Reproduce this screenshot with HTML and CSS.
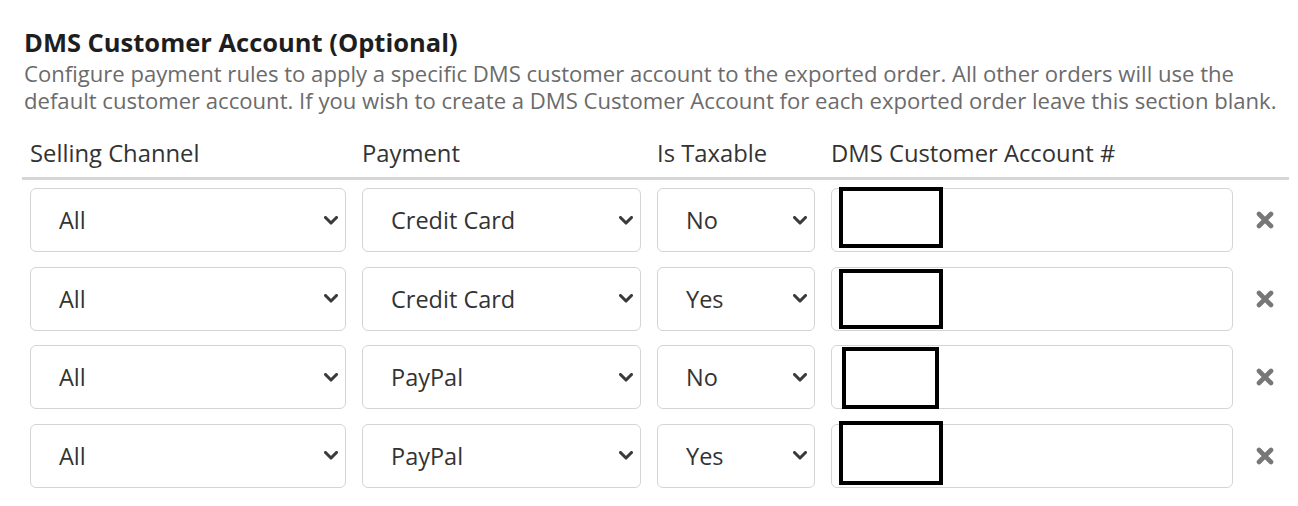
FILE: index.html
```html
<!DOCTYPE html>
<html>
<head>
<meta charset="utf-8">
<link rel="stylesheet" href="styles.css">
</head>
<body>
<section class="section">
  <h2 class="title">DMS Customer Account (Optional)</h2>
  <p class="desc">Configure payment rules to apply a specific DMS customer account to the exported order. All other orders will use the default customer account. If you wish to create a DMS Customer Account for each exported order leave this section blank.</p>
  <div class="grid head">
    <div class="th">Selling Channel</div>
    <div class="th">Payment</div>
    <div class="th">Is Taxable</div>
    <div class="th">DMS Customer Account #</div>
    <div class="th"></div>
  </div>
  <div class="rows">
    <div class="grid row">
      <div class="cell"><div class="select"><span>All</span><svg class="chev" viewBox="0 0 14 9"><path d="M1.5 1.5 L7 7 L12.5 1.5"/></svg></div></div>
      <div class="cell"><div class="select"><span>Credit Card</span><svg class="chev" viewBox="0 0 14 9"><path d="M1.5 1.5 L7 7 L12.5 1.5"/></svg></div></div>
      <div class="cell"><div class="select"><span>No</span><svg class="chev" viewBox="0 0 14 9"><path d="M1.5 1.5 L7 7 L12.5 1.5"/></svg></div></div>
      <div class="cell"><div class="field"><div class="hosted box-1"></div></div></div>
      <div class="cell x"><svg class="xicon" viewBox="0 0 18 18"><path d="M3 3 L15 15 M15 3 L3 15"/></svg></div>
    </div>
    <div class="grid row">
      <div class="cell"><div class="select"><span>All</span><svg class="chev" viewBox="0 0 14 9"><path d="M1.5 1.5 L7 7 L12.5 1.5"/></svg></div></div>
      <div class="cell"><div class="select"><span>Credit Card</span><svg class="chev" viewBox="0 0 14 9"><path d="M1.5 1.5 L7 7 L12.5 1.5"/></svg></div></div>
      <div class="cell"><div class="select"><span>Yes</span><svg class="chev" viewBox="0 0 14 9"><path d="M1.5 1.5 L7 7 L12.5 1.5"/></svg></div></div>
      <div class="cell"><div class="field"><div class="hosted box-2"></div></div></div>
      <div class="cell x"><svg class="xicon" viewBox="0 0 18 18"><path d="M3 3 L15 15 M15 3 L3 15"/></svg></div>
    </div>
    <div class="grid row">
      <div class="cell"><div class="select"><span>All</span><svg class="chev" viewBox="0 0 14 9"><path d="M1.5 1.5 L7 7 L12.5 1.5"/></svg></div></div>
      <div class="cell"><div class="select"><span>PayPal</span><svg class="chev" viewBox="0 0 14 9"><path d="M1.5 1.5 L7 7 L12.5 1.5"/></svg></div></div>
      <div class="cell"><div class="select"><span>No</span><svg class="chev" viewBox="0 0 14 9"><path d="M1.5 1.5 L7 7 L12.5 1.5"/></svg></div></div>
      <div class="cell"><div class="field"><div class="hosted box-3"></div></div></div>
      <div class="cell x"><svg class="xicon" viewBox="0 0 18 18"><path d="M3 3 L15 15 M15 3 L3 15"/></svg></div>
    </div>
    <div class="grid row">
      <div class="cell"><div class="select"><span>All</span><svg class="chev" viewBox="0 0 14 9"><path d="M1.5 1.5 L7 7 L12.5 1.5"/></svg></div></div>
      <div class="cell"><div class="select"><span>PayPal</span><svg class="chev" viewBox="0 0 14 9"><path d="M1.5 1.5 L7 7 L12.5 1.5"/></svg></div></div>
      <div class="cell"><div class="select"><span>Yes</span><svg class="chev" viewBox="0 0 14 9"><path d="M1.5 1.5 L7 7 L12.5 1.5"/></svg></div></div>
      <div class="cell"><div class="field"><div class="hosted box-4"></div></div></div>
      <div class="cell x"><svg class="xicon" viewBox="0 0 18 18"><path d="M3 3 L15 15 M15 3 L3 15"/></svg></div>
    </div>
  </div>
</section>
</body>
</html>
```
FILE: styles.css
```css
* { box-sizing: border-box; }
html, body { margin: 0; padding: 0; background: #fff; }
body { font-family: "Open Sans", "Noto Sans", sans-serif; color: #333; }
.section { width: 1267px; margin-left: 22px; padding-top: 27px; }
.title { margin: 0 0 0 2px; font-size: 25.5px; font-weight: 700; line-height: 30px; color: #1e1e1e; }
.desc { margin: 3px 0 0 2px; font-size: 22.1px; line-height: 26.5px; color: #6b6b6b; }
.grid { display: grid; grid-template-columns: 332px 295px 174px 418px 48px; }
.head { margin-top: 25px; border-bottom: 3px solid #d6d6d6; padding-bottom: 9px; }
.th { padding: 0 8px; font-size: 23.8px; line-height: 30px; color: #333; }
.rows { display: flex; flex-direction: column; gap: 14.67px; padding-top: 8px; }
.cell { padding: 0 8px; }
.select { height: 64px; border: 1.5px solid #d4d4d4; border-radius: 6px; display: flex; align-items: center; justify-content: space-between; padding: 0 7px 0 28px; font-size: 23.5px; color: #333; }
.chev { width: 14px; height: 9px; fill: none; stroke: #3a3a3a; stroke-width: 3.1; stroke-linecap: round; stroke-linejoin: round; }
.field { position: relative; height: 64px; border: 1.5px solid #d4d4d4; border-radius: 6px; }
.hosted { position: absolute; border: 4px solid #000; background: #fff; }
.box-1 { left: 7px; top: -2px; width: 104px; height: 61px; }
.box-2 { left: 7px; top: 1px; width: 104px; height: 60px; }
.box-3 { left: 10px; top: 1px; width: 97px; height: 62px; }
.box-4 { left: 7px; top: -4px; width: 104px; height: 64px; }
.x { display: flex; align-items: center; justify-content: center; }
.xicon { width: 18px; height: 18px; fill: none; stroke: #777; stroke-width: 4.6; stroke-linecap: round; }
```
